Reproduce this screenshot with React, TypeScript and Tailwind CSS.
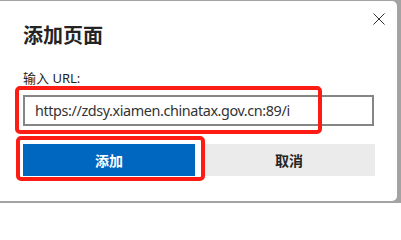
export default function App() {
  return (
    <div className="w-[401px] h-[203px] bg-[#a3a3a3] overflow-hidden font-['Noto_Sans','Noto_Sans_CJK_SC',sans-serif]">
      <div className="relative mt-px w-[397px] h-[200px] bg-white rounded-r-[5px] pl-[23px] pr-[12px] pt-[12px]">
        <div className="flex justify-between items-start">
          <h1 className="mt-[9px] text-[20px] leading-[28px] font-bold text-[#242424]">添加页面</h1>
          <button className="w-[12px] h-[12px] text-[#333]">
            <svg viewBox="0 0 12 12" className="w-[12px] h-[12px]">
              <path d="M0.5 0.5 L11.5 11.5 M11.5 0.5 L0.5 11.5" stroke="currentColor" strokeWidth="1" fill="none" />
            </svg>
          </button>
        </div>

        <div className="mt-[18px] text-[13px] leading-[20px] text-[#242424]">输入 URL:</div>

        <div className="mt-[7px] h-[31px] w-[351px] border-2 border-[#858585] flex items-center px-[10px] text-[14.4px] tracking-[-0.4px] text-[#333]">
          https://zdsy.xiamen.chinatax.gov.cn:89/i
        </div>

        <div className="mt-[18px] flex gap-[8px]">
          <button className="w-[172px] h-[32px] bg-[#0067c0] text-white text-[14px] font-bold">添加</button>
          <button className="w-[172px] h-[32px] bg-[#ebebeb] text-[#242424] text-[14px] font-bold">取消</button>
        </div>

        {/* annotation boxes */}
        <div className="absolute left-[15px] top-[85px] w-[307px] h-[48px] border-4 border-[#fc1c14] rounded-[5px]" />
        <div className="absolute left-[16px] top-[135px] w-[189px] h-[45px] border-4 border-[#fc1c14] rounded-[5px]" />
      </div>
    </div>
  );
}
